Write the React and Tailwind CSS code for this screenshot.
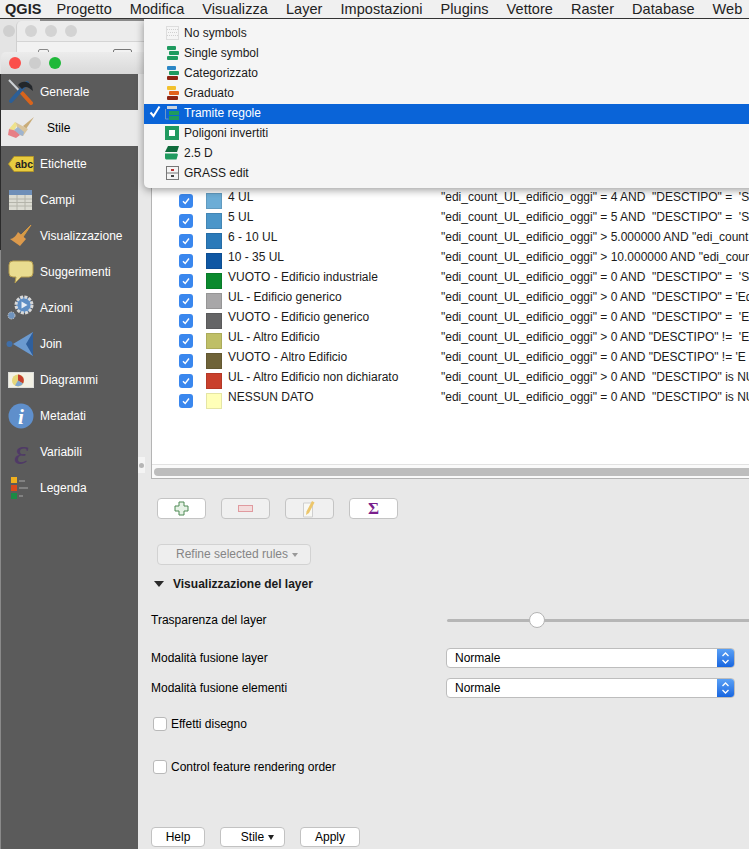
import React from "react";

const menus = ["Progetto", "Modifica", "Visualizza", "Layer", "Impostazioni", "Plugins", "Vettore", "Raster", "Database", "Web"];

const q = '"edi_count_UL_edificio_oggi"';
const rules = [
  { label: "4 UL", color: "#6cadd6", expr: `${q} = 4 AND  "DESCTIPO" =  'S` },
  { label: "5 UL", color: "#4b96c9", expr: `${q} = 5 AND  "DESCTIPO" =  'S` },
  { label: "6 - 10 UL", color: "#2b7ab9", expr: `${q} > 5.000000 AND "edi_count` },
  { label: "10 - 35 UL", color: "#0f57a3", expr: `${q} > 10.000000 AND "edi_count` },
  { label: "VUOTO - Edificio industriale", color: "#0b8a2e", expr: `${q} = 0 AND  "DESCTIPO" =  'S` },
  { label: "UL - Edificio generico", color: "#a8a7a8", expr: `${q} > 0 AND  "DESCTIPO" = 'Ed` },
  { label: "VUOTO - Edificio generico", color: "#656566", expr: `${q} = 0 AND  "DESCTIPO" =  'E` },
  { label: "UL - Altro Edificio", color: "#bfbf66", expr: `${q} > 0 AND "DESCTIPO" !=  'E` },
  { label: "VUOTO - Altro Edificio", color: "#6f6338", expr: `${q} = 0 AND "DESCTIPO" != 'E` },
  { label: "UL - Altro Edificio non dichiarato", color: "#c9402c", expr: `${q} > 0 AND  "DESCTIPO" is NU` },
  { label: "NESSUN DATO", color: "#ffffb8", expr: `${q} = 0 AND  "DESCTIPO" is NU` },
];

function Bars({ a, b, c }) {
  return (
    <svg width="16" height="16" viewBox="0 0 16 16">
      <rect x="3" y="1" width="9" height="4" rx="1" fill={a} />
      <rect x="5" y="6" width="10" height="4" rx="1" fill={b} />
      <rect x="3" y="11" width="11" height="4" rx="1" fill={c} />
    </svg>
  );
}

const symbolTypes = [
  {
    name: "No symbols",
    icon: (
      <svg width="16" height="16" viewBox="0 0 16 16">
        <rect x="2.500" y="1.500" width="12" height="13" fill="none" stroke="#c4c4c4" strokeDasharray="1 1" />
        <path d="M3 4.500h11M4 7.500h9M3 10.500h11" stroke="#d0d0d0" strokeDasharray="1 1" />
      </svg>
    ),
  },
  { name: "Single symbol", icon: <Bars a="#1f9a5f" b="#1f9a5f" c="#1f9a5f" /> },
  { name: "Categorizzato", icon: <Bars a="#2b86c5" b="#1f9a5f" c="#8e2413" /> },
  { name: "Graduato", icon: <Bars a="#f2c12e" b="#e2611c" c="#8e2413" /> },
  {
    name: "Tramite regole",
    selected: true,
    icon: (
      <svg width="16" height="16" viewBox="0 0 16 16">
        <rect x="3" y="1" width="10" height="3" fill="#c9d3de" />
        <path d="M1.500 4v10h3" fill="none" stroke="#6d97c9" />
        <rect x="5" y="6" width="10" height="4" fill="#1f9a5f" />
        <rect x="5" y="11" width="10" height="4" fill="#1f9a5f" />
      </svg>
    ),
  },
  {
    name: "Poligoni invertiti",
    icon: (
      <svg width="16" height="16" viewBox="0 0 16 16">
        <rect x="1" y="1" width="14" height="14" fill="#1f9a5f" />
        <rect x="5" y="5" width="6" height="6" fill="#fff" />
      </svg>
    ),
  },
  {
    name: "2.5 D",
    icon: (
      <svg width="16" height="16" viewBox="0 0 16 16">
        <path d="M4 1h11l-2 6H1z" fill="#0f6b3c" />
        <path d="M1 8.500h12l1 1-1.500 5H2a2 2 0 0 1-1-2z" fill="#1f9a5f" />
      </svg>
    ),
  },
  {
    name: "GRASS edit",
    icon: (
      <svg width="16" height="16" viewBox="0 0 16 16">
        <rect x="2.500" y="1.500" width="12" height="13" fill="#f4f4f4" stroke="#777" />
        <path d="M2.500 8h12" stroke="#777" />
        <rect x="7" y="4" width="3" height="2" fill="#b33" />
        <rect x="7" y="10" width="3" height="2" fill="#444" />
      </svg>
    ),
  },
];

const tabs = [
  {
    name: "Generale",
    icon: (
      <svg width="26" height="26" viewBox="0 0 26 26">
        <path d="M1 1l22 23" stroke="#cfd3d6" strokeWidth="2" />
        <path d="M14 14l9 10" stroke="#d8641c" strokeWidth="4" strokeLinecap="round" />
        <path d="M19 4L3 22" stroke="#2c5f97" strokeWidth="4" strokeLinecap="round" />
        <path d="M10 6c4-5 10-4 14 1l1 5-4-3c-3-2-5-1-7 1z" fill="#23272b" />
      </svg>
    ),
  },
  {
    name: "Stile",
    active: true,
    icon: (
      <svg width="28" height="26" viewBox="0 0 28 26">
        <path d="M27 2L16 11l3 3z" fill="#c9ac78" />
        <path d="M8 7l13 7-5 7-3-1z" fill="#d9c49c" />
        <path d="M8 7L2 14l5 2 3-6z" fill="#eee28b" />
        <path d="M2 14l-1 6 8 3 4-3-3-4z" fill="#e77f86" />
        <path d="M7 15l6 5 3 1 1-4-6-5z" fill="#9fb4cf" />
      </svg>
    ),
  },
  {
    name: "Etichette",
    icon: (
      <svg width="26" height="16" viewBox="0 0 26 16">
        <path d="M6 0.500h19.500v15H6L0.500 8z" fill="#e8cc3f" stroke="#b3962a" />
        <text x="7" y="12" fontSize="10.500" fontWeight="700" fontFamily="Liberation Sans, sans-serif" fill="#222">abc</text>
      </svg>
    ),
  },
  {
    name: "Campi",
    icon: (
      <svg width="24" height="20" viewBox="0 0 24 20">
        <rect width="23" height="20" fill="#dbdbd2" />
        <rect width="23" height="5" fill="#6f8fb8" />
        <path d="M0 9h23M0 12.500h23M0 16h23M8 5v15M16 5v15" stroke="#b4b4aa" strokeWidth="1" />
      </svg>
    ),
  },
  {
    name: "Visualizzazione",
    icon: (
      <svg width="24" height="24" viewBox="0 0 24 24">
        <path d="M22 1L12 11l2 2z" fill="#d59a45" stroke="#d59a45" />
        <path d="M9 8l8 7-6 7-10-7c3 0 6-3 8-7z" fill="#dc9a4c" />
      </svg>
    ),
  },
  {
    name: "Suggerimenti",
    icon: (
      <svg width="26" height="24" viewBox="0 0 26 24">
        <path d="M5 1h16a4 4 0 0 1 4 4v8a4 4 0 0 1-4 4H13l-6 6 1-6H5a4 4 0 0 1-4-4V5a4 4 0 0 1 4-4z" fill="#e9dc90" stroke="#b39b4e" />
      </svg>
    ),
  },
  {
    name: "Azioni",
    icon: (
      <svg width="28" height="26" viewBox="0 0 28 26">
        <circle cx="17" cy="10" r="8" fill="#5f8ec4" stroke="#d9d9d9" strokeWidth="3" strokeDasharray="3 1.200" />
        <path d="M14.500 6.500v7l6-3.500z" fill="#e8eef6" />
        <circle cx="4.500" cy="20.500" r="3.500" fill="#6f93bd" stroke="#c9c9c9" strokeDasharray="1.500 1" />
      </svg>
    ),
  },
  {
    name: "Join",
    icon: (
      <svg width="30" height="26" viewBox="0 0 30 26">
        <circle cx="3.500" cy="13" r="3" fill="#3f6ea8" />
        <path d="M7 13L27 1v24z" fill="#6b9ad0" />
        <path d="M27 1v24l-7-12z" fill="#2f5f9c" />
      </svg>
    ),
  },
  {
    name: "Diagrammi",
    icon: (
      <svg width="26" height="16" viewBox="0 0 26 16">
        <rect width="26" height="16" fill="#dfdfdb" />
        <rect x="1" y="1" width="24" height="14" fill="#f3f1e4" />
        <circle cx="10" cy="8.500" r="6" fill="#e6d77a" />
        <path d="M10 8.500V2.500a6 6 0 0 1 5 9z" fill="#c63f2c" />
        <path d="M10 8.500l5 3a6 6 0 0 1-8 2z" fill="#7fa6cf" />
      </svg>
    ),
  },
  {
    name: "Metadati",
    icon: (
      <svg width="26" height="26" viewBox="0 0 26 26">
        <circle cx="13" cy="13" r="12.500" fill="#5f8fcb" />
        <text x="13" y="21" textAnchor="middle" fontSize="21" fontWeight="700" fontStyle="italic" fontFamily="Liberation Serif, serif" fill="#fff">i</text>
      </svg>
    ),
  },
  {
    name: "Variabili",
    icon: <span className="font-['Liberation_Serif',serif] text-[36px] leading-none text-[#4f3a66] italic">ε</span>,
  },
  {
    name: "Legenda",
    icon: (
      <svg width="20" height="24" viewBox="0 0 20 24">
        <rect x="0" y="1" width="6" height="6" fill="#f0b01e" />
        <rect x="0" y="9" width="6" height="6" fill="#d9481c" />
        <rect x="0" y="17" width="6" height="6" fill="#1c8a45" />
        <path d="M8 5h6M8 12h9M8 20h4" stroke="#8f8f8f" strokeWidth="1.500" />
      </svg>
    ),
  },
];

function CheckBox() {
  return (
    <span className="mt-[3px] flex h-[14px] w-[14px] shrink-0 items-center justify-center rounded-[3px] bg-[#3a87ee]">
      <svg width="10" height="10" viewBox="0 0 10 10">
        <path d="M2 5.200l2.200 2.300L8 2.500" fill="none" stroke="#fff" strokeWidth="1.400" />
      </svg>
    </span>
  );
}

function ToolButton({ disabled, children }) {
  return (
    <button className={`flex h-[21px] w-[49px] items-center justify-center rounded-[4px] border border-[#c4c4c4] ${disabled ? "bg-[#f0f0f0]" : "bg-white"}`}>
      {children}
    </button>
  );
}

function Select() {
  return (
    <div className="flex h-5 w-[289px] overflow-hidden rounded-[4px] border border-[#bdbdbd] bg-white">
      <span className="flex-1 pl-2 text-xs leading-[18px] text-black">Normale</span>
      <span className="flex w-[17px] items-center justify-center bg-gradient-to-b from-[#5aa0f5] to-[#1866e0]">
        <svg width="9" height="14" viewBox="0 0 9 14">
          <path d="M1.500 5L4.500 2l3 3M1.500 9l3 3 3-3" fill="none" stroke="#fff" strokeWidth="1.300" />
        </svg>
      </span>
    </div>
  );
}

function PlainCheck({ label }) {
  return (
    <div className="flex h-[14px] items-center gap-1 pl-[2px]">
      <span className="h-[14px] w-[14px] rounded-[3px] border border-[#b9b9b9] bg-white" />
      <span className="text-xs text-black">{label}</span>
    </div>
  );
}

function FootButton({ width, children }) {
  return (
    <button className={`flex h-5 items-center justify-center gap-1 rounded-[4px] border border-[#c2c2c2] bg-white text-xs text-black ${width}`}>
      {children}
    </button>
  );
}

export default function App() {
  return (
    <div className="relative h-[849px] w-[749px] overflow-hidden bg-[#8a8a8a] font-['Liberation_Sans',Arial,sans-serif]">
      {/* Menu bar */}
      <div className="relative z-30 flex h-[19px] items-center gap-[18px] border-b border-[#333] bg-[#f0f0f0] pl-[5px] text-[14.5px] leading-none tracking-[0.06px] whitespace-nowrap text-[#222]">
        <span className="mr-[-3px] font-bold">QGIS</span>
        {menus.map((m) => (
          <span key={m}>{m}</span>
        ))}
      </div>

      {/* Windows behind the dialog */}
      <div className="absolute top-[19px] left-0 h-[60px] w-[40px] bg-[#e4e4e4] pt-[6px] pl-[3px]">
        <span className="block h-3 w-3 rounded-full bg-[#cfcfcf]" />
      </div>
      <div className="absolute top-[21px] left-[16px] h-[60px] w-[733px] rounded-t-[5px] border-l border-[#d0d0d0] bg-[#ececec]">
        <div className="flex h-[21px] items-center gap-2 border-b border-[#d4d4d4] pl-2">
          <span className="h-3 w-3 rounded-full bg-[#d3d3d3]" />
          <span className="h-3 w-3 rounded-full bg-[#d3d3d3]" />
          <span className="h-3 w-3 rounded-full bg-[#d3d3d3]" />
        </div>
        <div className="flex gap-[64px] bg-[#f2f2f2] pt-[7px] pl-[21px]">
          <span className="h-4 w-[11px] rounded-[2px] border border-[#888]" />
          <span className="h-4 w-[19px] rounded-[2px] border border-[#777]" />
        </div>
      </div>

      {/* Left edge of the desktop next to the dialog */}
      <div className="absolute top-[74px] left-0 h-[176px] w-[1px] bg-[#2b2b2b]" />

      {/* Layer properties dialog */}
      <div className="absolute top-[52px] left-[1px] flex h-[797px] w-[748px] flex-col">
        <div className="flex h-[22px] shrink-0 items-center gap-2 rounded-t-[5px] bg-gradient-to-b from-[#ececec] to-[#d9d9d9] pl-2">
          <span className="h-3 w-3 rounded-full bg-[#fb4f4b]" />
          <span className="h-3 w-3 rounded-full bg-[#cdcdcd]" />
          <span className="h-3 w-3 rounded-full bg-[#1fb83a]" />
        </div>

        <div className="relative flex min-h-0 flex-1">
          {/* Sidebar */}
          <div className="w-[137px] shrink-0 bg-[#5b5b5b]">
            {tabs.map((t) => (
              <div key={t.name} className={`flex h-9 items-center ${t.active ? "bg-[#e9e9e9] text-black" : "text-white"}`}>
                <span className="flex w-[39px] shrink-0 items-center justify-center pl-[1px]">{t.icon}</span>
                <span className={`text-xs font-medium ${t.active ? "pl-[7px]" : ""}`}>{t.name}</span>
              </div>
            ))}
          </div>

          {/* Splitter handle */}
          <span className="absolute top-[383px] left-[137px] flex h-[16px] w-[7px] items-center justify-center bg-[#f4f4f4]">
            <span className="h-[5px] w-[5px] rounded-full bg-[#b5b5b5]" />
          </span>

          {/* Style panel */}
          <div className="min-w-0 flex-1 overflow-hidden bg-[#e8e8e8] pt-[26px] pl-[13px]">
            <div className="flex h-[379px] w-[620px] flex-col border border-[#b4b4b4] bg-white">
              <div className="flex-1 overflow-hidden pt-[90px]">
                {rules.map((r) => (
                  <div key={r.label} className="flex h-5 text-xs leading-3 whitespace-pre text-[#1a1a1a]">
                    <span className="ml-[27px]">
                      <CheckBox />
                    </span>
                    <span className="mt-[2px] ml-[13px] h-4 w-4 shrink-0 border border-black/10" style={{ backgroundColor: r.color }} />
                    <span className="ml-[6px] w-[213px] shrink-0">{r.label}</span>
                    <span>{r.expr}</span>
                  </div>
                ))}
              </div>
              <div className="flex h-[14px] shrink-0 items-center border-t border-[#e2e2e2] bg-[#fafafa] pl-[2px]">
                <span className="h-2 w-full rounded-l-full bg-[#bdbdbd]" />
              </div>
            </div>

            <div className="mt-[19px] flex gap-[15px] pl-[6px]">
              <ToolButton>
                <svg width="15" height="15" viewBox="0 0 15 15">
                  <path d="M5 1h5v4h4v5h-4v4H5v-4H1V5h4z" fill="#e6f2e6" stroke="#4f8a55" />
                </svg>
              </ToolButton>
              <ToolButton disabled>
                <svg width="15" height="7" viewBox="0 0 15 7">
                  <rect x="0.500" y="0.500" width="14" height="6" fill="#f3dcdc" stroke="#e09a9f" />
                </svg>
              </ToolButton>
              <ToolButton disabled>
                <svg width="16" height="18" viewBox="0 0 16 18">
                  <path d="M1.500 3h9v14h-9z" fill="#f8f8f4" stroke="#cfcfcf" />
                  <path d="M10 1l2.500 1.500L7 13l-3 2 .5-3.500z" fill="#ecc66c" />
                </svg>
              </ToolButton>
              <ToolButton>
                <span className="font-['Liberation_Serif',serif] text-[17px] leading-none font-bold text-[#7a1f8c]">Σ</span>
              </ToolButton>
            </div>

            <button className="mt-[25px] ml-[6px] flex h-[21px] w-[154px] items-center justify-center gap-[4px] rounded-[4px] border border-[#d2d2d2] bg-[#eeeeee] pb-[1px] pl-[6px] text-xs text-[#858585]">
              Refine selected rules
              <span className="mt-[1px] border-x-[3px] border-t-[4px] border-x-transparent border-t-[#999]" />
            </button>

            <div className="mt-[11px] flex h-4 items-center gap-[9px] pl-[3px]">
              <span className="border-x-[5px] border-t-[6px] border-x-transparent border-t-[#2a2a2a]" />
              <span className="text-xs font-bold text-[#1a1a1a]">Visualizzazione del layer</span>
            </div>

            <div className="mt-[20px] flex h-4 items-center text-xs text-black">
              <span className="w-[296px] shrink-0">Trasparenza del layer</span>
              <div className="relative flex h-4 flex-1 items-center">
                <span className="h-[3px] w-full rounded-l-full bg-[#b6b6b6]" />
                <span className="absolute top-0 left-[82px] h-4 w-4 rounded-full border border-[#b4b4b4] bg-white" />
              </div>
            </div>

            <div className="mt-[20px] flex h-5 items-center text-xs text-black">
              <span className="w-[295px] shrink-0">Modalità fusione layer</span>
              <Select />
            </div>
            <div className="mt-[10px] flex h-5 items-center text-xs text-black">
              <span className="w-[295px] shrink-0">Modalità fusione elementi</span>
              <Select />
            </div>

            <div className="mt-[19px]">
              <PlainCheck label="Effetti disegno" />
            </div>
            <div className="mt-[29px]">
              <PlainCheck label="Control feature rendering order" />
            </div>

            <div className="mt-[53px] flex gap-[15px]">
              <FootButton width="w-[54px]">Help</FootButton>
              <FootButton width="w-[65px] pl-[10px]">
                Stile
                <span className="border-x-[3.500px] border-t-[5px] border-x-transparent border-t-[#222]" />
              </FootButton>
              <FootButton width="w-[60px]">Apply</FootButton>
            </div>
          </div>
        </div>
      </div>

      {/* Open renderer dropdown */}
      <div className="absolute top-[19px] left-[144px] z-20 h-[169px] w-[620px] rounded-bl-[5px] bg-[#f5f5f5] pt-[5px] shadow-[0_2px_8px_rgba(0,0,0,0.4)]">
        {symbolTypes.map((s) => (
          <div key={s.name} className={`flex h-5 items-center pb-[2px] text-xs ${s.selected ? "bg-[#0a64d8] text-white" : "text-[#1a1a1a]"}`}>
            <span className="flex w-[20px] shrink-0 justify-center pl-[1px]">
              {s.selected && (
                <svg width="12" height="13" viewBox="0 0 12 13" className="-mt-1">
                  <path d="M1.500 7.500l3 3.500L10.500 1.500" fill="none" stroke="#fff" strokeWidth="2" />
                </svg>
              )}
            </span>
            <span className="flex w-[20px] shrink-0">{s.icon}</span>
            <span>{s.name}</span>
          </div>
        ))}
      </div>
    </div>
  );
}
